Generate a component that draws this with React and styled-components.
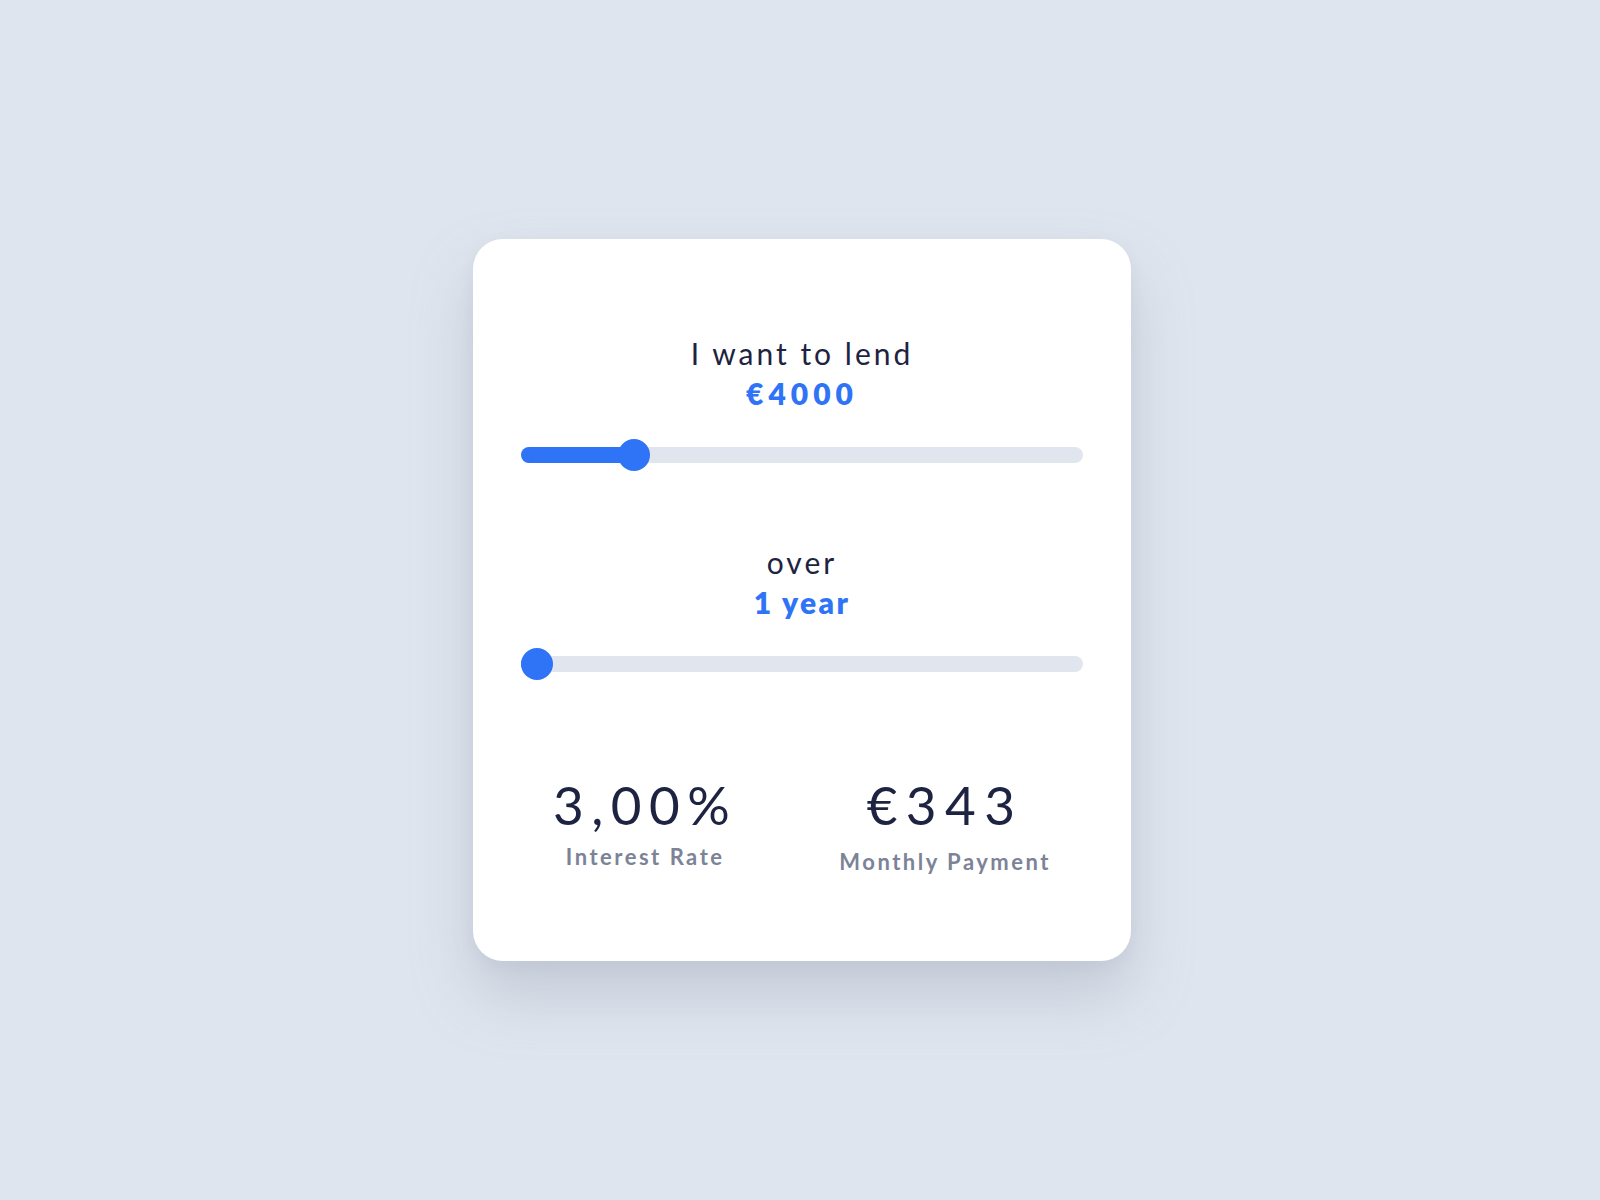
import React, { useState } from "react";
import styled, { createGlobalStyle } from "styled-components";

const Global = createGlobalStyle`
  html, body {
    margin: 0;
    padding: 0;
    background: #dfe5ee;
  }
  body {
    font-family: "Lato", "Noto Sans", sans-serif;
    -webkit-font-smoothing: antialiased;
  }
`;

const Page = styled.div`
  width: 1600px;
  height: 1200px;
  display: flex;
  justify-content: center;
  align-items: flex-start;
  padding-top: 239px;
  box-sizing: border-box;
  background: #dfe5ee;
`;

const Card = styled.section`
  width: 658px;
  height: 722px;
  box-sizing: border-box;
  margin-left: 4px;
  padding: 94px 48px 0;
  background: #ffffff;
  border-radius: 30px;
  box-shadow: 0 34px 60px rgba(150, 160, 180, 0.38), 0 6px 14px rgba(150, 160, 180, 0.12);
  display: flex;
  flex-direction: column;
`;

const Field = styled.div`
  display: flex;
  flex-direction: column;
  align-items: center;
  margin-top: ${(p) => p.$top || 0}px;
`;

const Prompt = styled.div`
  font-size: 30px;
  line-height: 40px;
  letter-spacing: 3px;
  color: #1d2340;
  font-weight: 400;
`;

const Value = styled.div`
  font-size: 30px;
  line-height: 40px;
  letter-spacing: ${(p) => p.$spacing || 2}px;
  color: #2f74f6;
  font-weight: 800;
`;

const Track = styled.div`
  position: relative;
  width: 100%;
  height: 16px;
  margin-top: ${(p) => p.$top}px;
  border-radius: 8px;
  background: #e1e6ee;
`;

const Fill = styled.div`
  height: 100%;
  border-radius: 8px;
  background: #2f74f6;
`;

const Thumb = styled.div`
  position: absolute;
  top: 50%;
  width: 32px;
  height: 32px;
  margin-left: -16px;
  margin-top: -16px;
  border-radius: 50%;
  background: #2f74f6;
`;

const Stats = styled.div`
  display: flex;
  justify-content: center;
  gap: 102px;
  margin-top: 103px;
`;

const Stat = styled.div`
  display: flex;
  flex-direction: column;
  align-items: center;
`;

const Figure = styled.div`
  font-size: 53px;
  line-height: 60px;
  letter-spacing: ${(p) => p.$spacing || 7}px;
  color: #1d2340;
  font-weight: 400;
`;

const Caption = styled.div`
  margin-top: ${(p) => p.$top || 0}px;
  font-size: 22px;
  line-height: 28px;
  letter-spacing: 2.5px;
  color: #7c8397;
  font-weight: 700;
`;

function Slider({ ratio, top }) {
  const pos = `calc(16px + (100% - 32px) * ${ratio})`;
  return (
    <Track $top={top}>
      <Fill style={{ width: pos }} />
      <Thumb style={{ left: pos }} />
    </Track>
  );
}

export default function App() {
  const [amount] = useState(4000);
  const [years] = useState(1);

  return (
    <>
      <Global />
      <Page>
        <Card>
          <Field>
            <Prompt>I want to lend</Prompt>
            <Value $spacing={5}>€{amount}</Value>
          </Field>
          <Slider ratio={0.183} top={34} />
          <Field $top={79}>
            <Prompt>over</Prompt>
            <Value $spacing={2.4}>{years} year</Value>
          </Field>
          <Slider ratio={0} top={34} />
          <Stats>
            <Stat>
              <Figure $spacing={7.5}>3,00%</Figure>
              <Caption $top={8}>Interest Rate</Caption>
            </Stat>
            <Stat>
              <Figure $spacing={8.5}>€343</Figure>
              <Caption $top={13}>Monthly Payment</Caption>
            </Stat>
          </Stats>
        </Card>
      </Page>
    </>
  );
}
